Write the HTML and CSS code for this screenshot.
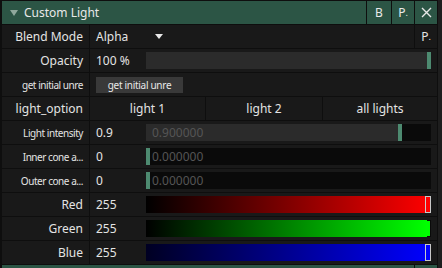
FILE: index.html
```html
<!DOCTYPE html>
<html>
<head>
<meta charset="utf-8">
<link rel="stylesheet" href="styles.css">
</head>
<body>
<div class="wrap">
  <div class="panel">
    <div class="header">
      <div class="title"><span class="tri"></span>Custom Light</div>
      <div class="hbtn b">B</div>
      <div class="hbtn">P<span class="dot">.</span></div>
      <div class="hbtn x">
        <svg width="11" height="11" viewBox="0 0 11 11"><path d="M1 1 L10 10 M10 1 L1 10" stroke="#e8e8e8" stroke-width="1.4" fill="none"/></svg>
      </div>
    </div>

    <div class="row blend">
      <div class="label">Blend Mode</div>
      <div class="value"><span class="val-text">Alpha</span><span class="arrow"></span></div>
      <div class="pbtn">P<span class="dot">.</span></div>
    </div>

    <div class="row">
      <div class="label">Opacity</div>
      <div class="value">
        <span class="num">100 %</span>
        <div class="slider grey"><div class="handle end"></div></div>
      </div>
    </div>

    <div class="row">
      <div class="label small">get initial unre</div>
      <div class="value"><div class="btn">get initial unre</div></div>
    </div>

    <div class="row options">
      <div class="label">light_option</div>
      <div class="opt">light 1</div>
      <div class="opt">light 2</div>
      <div class="opt">all lights</div>
    </div>

    <div class="row">
      <div class="label small">Light intensity</div>
      <div class="value">
        <span class="num">0.9</span>
        <div class="slider dark">
          <div class="fill" style="width: 88.4%"><span class="stext">0.900000</span></div>
          <div class="handle"></div>
        </div>
      </div>
    </div>

    <div class="row">
      <div class="label small">Inner cone a...</div>
      <div class="value">
        <span class="num">0</span>
        <div class="slider dark"><div class="handle"></div><span class="stext">0.000000</span></div>
      </div>
    </div>

    <div class="row">
      <div class="label small">Outer cone a...</div>
      <div class="value">
        <span class="num">0</span>
        <div class="slider dark"><div class="handle"></div><span class="stext">0.000000</span></div>
      </div>
    </div>

    <div class="row">
      <div class="label">Red</div>
      <div class="value">
        <span class="num">255</span>
        <div class="cbar red"><div class="chandle outline red-h"></div></div>
      </div>
    </div>

    <div class="row">
      <div class="label">Green</div>
      <div class="value">
        <span class="num">255</span>
        <div class="cbar green"><div class="chandle plain green-h"></div></div>
      </div>
    </div>

    <div class="row">
      <div class="label">Blue</div>
      <div class="value">
        <span class="num">255</span>
        <div class="cbar blue"><div class="chandle outline blue-h"></div></div>
      </div>
    </div>

    <div class="footer"><div class="fleft"></div><div class="fright"></div></div>
  </div>
  <div class="scroll"></div>
</div>
</body>
</html>
```

FILE: styles.css
```css
html, body {
  margin: 0;
  padding: 0;
  background: #0e0e0e;
  width: 442px;
  height: 268px;
  overflow: hidden;
  font-family: "Noto Sans", "Open Sans", sans-serif;
  color: #e4e4e4;
  font-size: 12px;
}

.wrap {
  display: flex;
  height: 268px;
}

.panel {
  width: 435px;
  padding: 1px 1px 0 2px;
  background: #0e0e0e;
  display: flex;
  flex-direction: column;
  gap: 1px;
}

.scroll {
  width: 4px;
  background: #1e1e1e;
}

.header {
  height: 23px;
  display: flex;
  gap: 1px;
}

.title {
  flex: 1;
  background: #2c5545;
  display: flex;
  align-items: center;
  padding-left: 8px;
  font-size: 12px;
  color: #e8e8e8;
}

.tri {
  width: 0;
  height: 0;
  border-left: 4px solid transparent;
  border-right: 4px solid transparent;
  border-top: 6px solid #8fa89c;
  margin-right: 6px;
  margin-top: 1px;
}

.hbtn {
  width: 22px;
  background: #2c5545;
  display: flex;
  align-items: center;
  justify-content: center;
  font-size: 12px;
  color: #eaeaea;
}

.hbtn.b { width: 24px; }

.dot {
  font-size: 9px;
  margin-left: 0;
  align-self: flex-end;
  margin-bottom: 5px;
}

.row {
  height: 23px;
  display: grid;
  grid-template-columns: 87px 1fr;
  column-gap: 1px;
}

.row.blend { grid-template-columns: 87px 1fr 22px; }
.row.options { grid-template-columns: 87px 115px 116px 1fr; }

.label {
  background: #191919;
  display: flex;
  align-items: center;
  justify-content: flex-end;
  padding-right: 6px;
  white-space: nowrap;
}

.label.small {
  font-size: 10px;
  letter-spacing: -0.45px;
}

.value {
  background: #191919;
  display: flex;
  align-items: center;
  padding: 0 6px 0 6px;
}

.val-text { width: 59px; }

.arrow {
  width: 0;
  height: 0;
  border-left: 4px solid transparent;
  border-right: 4px solid transparent;
  border-top: 5px solid #e8e8e8;
}

.pbtn {
  background: #191919;
  display: flex;
  align-items: center;
  justify-content: center;
}

.num { width: 50px; flex: none; }

.slider {
  flex: 1;
  height: 17px;
  position: relative;
  display: flex;
  align-items: center;
}

.slider.grey { background: #2b2b2b; }
.slider.dark { background: #0a0a0a; }

.slider .fill {
  height: 17px;
  background: #2b2b2b;
  display: flex;
  align-items: center;
}

.handle {
  width: 4px;
  height: 17px;
  background: #4d8a70;
  flex: none;
}

.handle.end { margin-left: auto; }

.stext {
  color: #555555;
  padding-left: 2px;
  font-size: 12px;
}

.fill .stext { padding-left: 6px; }

.btn {
  width: 87px;
  height: 16px;
  background: #393939;
  display: flex;
  align-items: center;
  justify-content: center;
  font-size: 10px;
  letter-spacing: -0.3px;
  color: #e8e8e8;
}

.opt {
  background: #191919;
  display: flex;
  align-items: center;
  justify-content: center;
}

.cbar {
  flex: 1;
  height: 17px;
  display: flex;
  justify-content: flex-end;
  align-items: center;
}

.cbar.red { background: linear-gradient(to right, #000000, #ff0000); }
.cbar.green { background: linear-gradient(to right, #000000 0%, #00ff00 98.5%, #0a0a0a 98.5%); }
.cbar.blue { background: linear-gradient(to right, #000022, #0000ff); }

.chandle {
  box-sizing: border-box;
  width: 6px;
  height: 17px;
}

.chandle.outline { border: 1px solid #c8c8c8; }
.red-h { background: #ff0000; }
.blue-h { background: #0000ff; }
.chandle.plain {
  width: 4px;
  height: 15px;
  margin-right: 1px;
  background: #00ff00;
}

.footer {
  flex: 1;
  display: flex;
  gap: 1px;
}

.fleft { flex: 1; background: #2c5545; }
.fright { width: 22px; background: #2c5545; }
```
